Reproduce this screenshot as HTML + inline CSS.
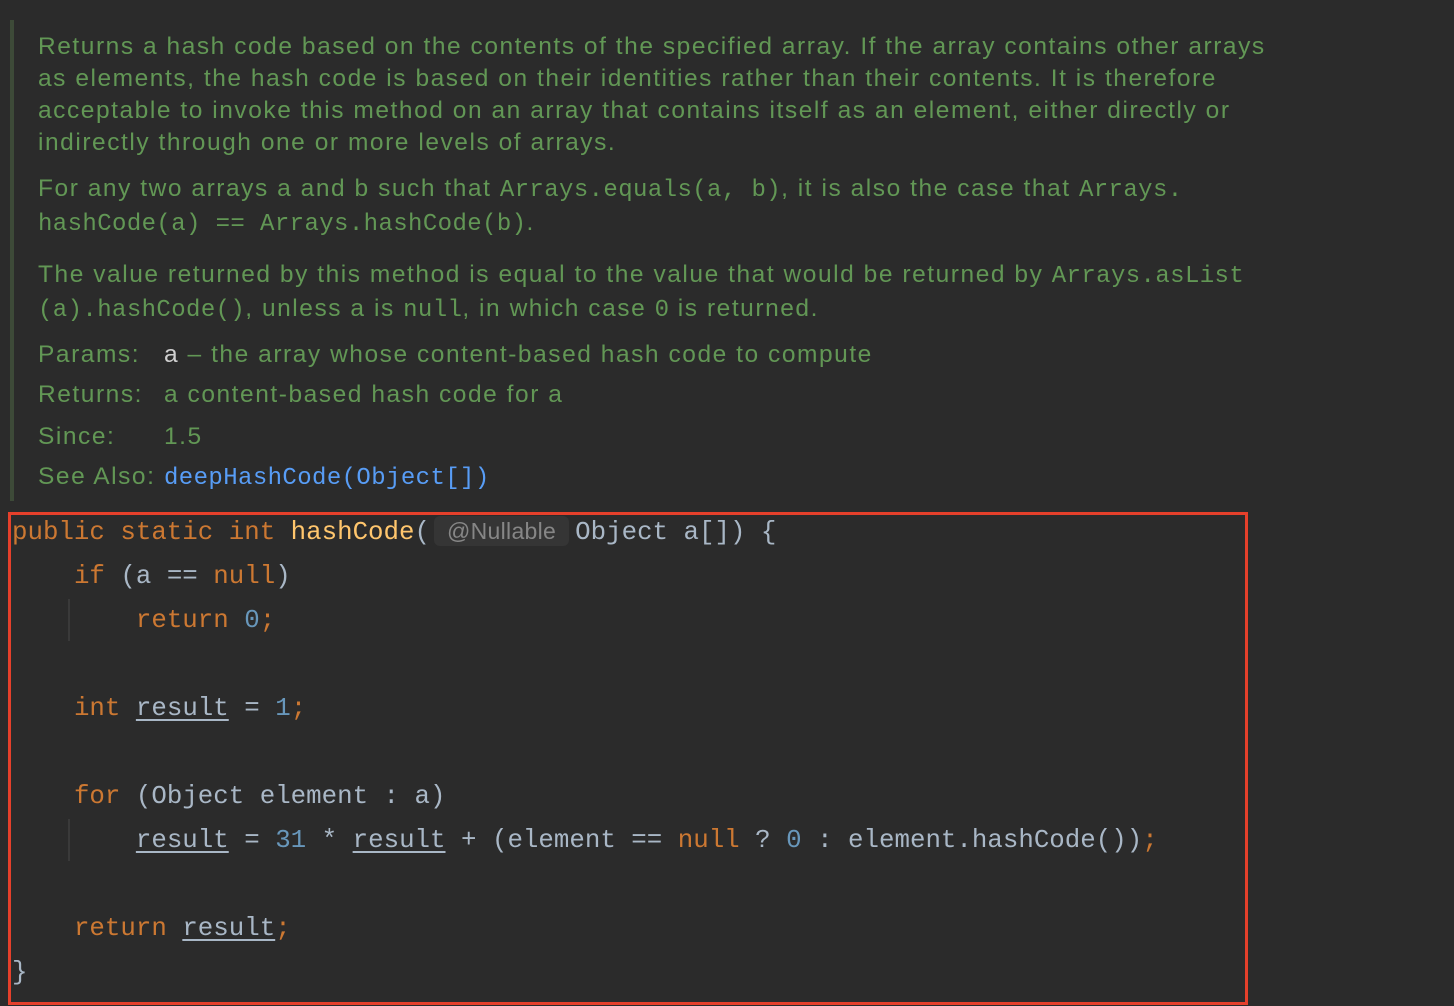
<!DOCTYPE html>
<html><head><meta charset="utf-8"><style>
body{margin:0;width:1454px;height:1006px;background:#2b2b2b;overflow:hidden;position:relative}
.d{position:absolute;left:38px;height:32px;line-height:32px;font-family:"Liberation Sans",sans-serif;font-size:24.5px;letter-spacing:1.55px;color:#629755;white-space:pre}
.m{font-family:"Liberation Mono",monospace;font-size:24px;letter-spacing:0.4px}
.bar{position:absolute;left:10px;top:20px;width:4px;height:481px;background:#3d4a38}
.c{position:absolute;left:12px;height:44px;line-height:44px;font-family:"Liberation Mono",monospace;font-size:25.8px;color:#a9b7c6;white-space:pre}
.k{color:#cc7832}.f{color:#ffc66d}.n{color:#6897bb}.u{text-decoration:underline;text-underline-offset:4px}
.box{position:absolute;left:8px;top:512px;width:1234px;height:487px;border:3px solid #e5402b}
.g{position:absolute;left:68px;width:2px;background:#3a3a3a}
.ann{display:inline-block;background:#353535;color:#868686;font-family:"Liberation Sans",sans-serif;font-size:23px;border-radius:6px;padding:0 13px;line-height:30px;margin:0 6px 0 4px;letter-spacing:0.3px}
.lab{display:inline-block;width:126px}
</style></head><body>
<div class="bar"></div>
<div class="d" style="top:31px">Returns a hash code based on the contents of the specified array. If the array contains other arrays</div>
<div class="d" style="top:63px">as elements, the hash code is based on their identities rather than their contents. It is therefore</div>
<div class="d" style="top:95px">acceptable to invoke this method on an array that contains itself as an element, either directly or</div>
<div class="d" style="top:127px">indirectly through one or more levels of arrays.</div>
<div class="d" style="top:173px">For any two arrays a and b such that <span class="m">Arrays.equals(a, b)</span>, it is also the case that <span class="m">Arrays.</span></div>
<div class="d" style="top:207px"><span class="m">hashCode(a) == Arrays.hashCode(b)</span>.</div>
<div class="d" style="top:259px">The value returned by this method is equal to the value that would be returned by <span class="m">Arrays.asList</span></div>
<div class="d" style="top:293px"><span class="m">(a).hashCode()</span>, unless a is <span class="m">null</span>, in which case <span class="m">0</span> is returned.</div>
<div class="d" style="top:339px"><span class="lab">Params:</span><span style="color:#d0d0d0">a</span> – the array whose content-based hash code to compute</div>
<div class="d" style="top:379px"><span class="lab">Returns:</span>a content-based hash code for a</div>
<div class="d" style="top:421px"><span class="lab">Since:</span>1.5</div>
<div class="d" style="top:461px"><span class="lab">See Also:</span><span class="m" style="color:#589df6">deepHashCode(Object[])</span></div>

<div class="box"></div>
<div class="g" style="top:599px;height:42px"></div>
<div class="g" style="top:819px;height:42px"></div>
<div class="c" style="top:511px"><span class="k">public static int </span><span class="f">hashCode</span>(<span class="ann">@Nullable</span>Object a[]) {</div>
<div class="c" style="top:555px">    <span class="k">if</span> (a == <span class="k">null</span>)</div>
<div class="c" style="top:599px">        <span class="k">return </span><span class="n">0</span><span class="k">;</span></div>
<div class="c" style="top:687px">    <span class="k">int </span><span class="u">result</span> = <span class="n">1</span><span class="k">;</span></div>
<div class="c" style="top:775px">    <span class="k">for</span> (Object element : a)</div>
<div class="c" style="top:819px">        <span class="u">result</span> = <span class="n">31</span> * <span class="u">result</span> + (element == <span class="k">null</span> ? <span class="n">0</span> : element.hashCode())<span class="k">;</span></div>
<div class="c" style="top:907px">    <span class="k">return </span><span class="u">result</span><span class="k">;</span></div>
<div class="c" style="top:951px">}</div>
</body></html>
